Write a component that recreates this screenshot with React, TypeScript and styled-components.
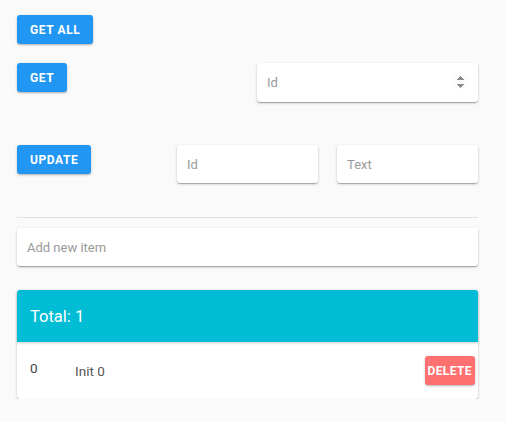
import React from 'react';
import styled, { createGlobalStyle } from 'styled-components';

const Global = createGlobalStyle`
  html, body { margin: 0; padding: 0; background: #fafafa; }
  body { font-family: Roboto, "Noto Sans", sans-serif; }
  * { box-sizing: border-box; }
`;

const Page = styled.div`
  width: 461px;
  margin-left: 17px;
  padding-top: 15px;
  display: flex;
  flex-direction: column;
`;

const Row = styled.div<{ $cols: number; $mb: number }>`
  display: grid;
  grid-template-columns: repeat(${p => p.$cols}, 1fr);
  column-gap: 19px;
  align-items: start;
  margin-bottom: ${p => p.$mb}px;
`;

const Button = styled.button<{ $danger?: boolean }>`
  justify-self: start;
  height: 29px;
  padding: 0 ${p => (p.$danger ? 3 : 13)}px;
  border: none;
  border-radius: 3px;
  background: ${p => (p.$danger ? '#ff7070' : '#2196f3')};
  color: #fff;
  font-family: Roboto, sans-serif;
  font-weight: 700;
  font-size: 12px;
  letter-spacing: ${p => (p.$danger ? 0.4 : 0.6)}px;
  text-transform: uppercase;
  box-shadow: 0 1px 3px rgba(0, 0, 0, 0.2), 0 1px 1px rgba(0, 0, 0, 0.12);
  cursor: pointer;
`;

const Input = styled.input<{ $h?: number }>`
  width: 100%;
  height: ${p => p.$h ?? 38}px;
  padding: 0 10px;
  border: none;
  border-radius: 3px;
  background: #fff;
  font-family: Roboto, sans-serif;
  font-size: 13px;
  color: #333;
  outline: none;
  box-shadow: 0 1px 3px rgba(0, 0, 0, 0.2), 0 1px 1px rgba(0, 0, 0, 0.14),
    0 2px 1px -1px rgba(0, 0, 0, 0.12);
  &::placeholder { color: #9a9a9a; }
  &:focus { caret-color: #2196f3; }
`;

const Divider = styled.hr`
  width: 100%;
  height: 1px;
  border: none;
  background: #e2e2e2;
  margin: 0 0 10px;
`;

const AddWrap = styled.div`
  margin-bottom: 24px;
`;

const Card = styled.div`
  border-radius: 3px;
  background: #fff;
  box-shadow: 0 1px 3px rgba(0, 0, 0, 0.2), 0 1px 1px rgba(0, 0, 0, 0.14),
    0 2px 1px -1px rgba(0, 0, 0, 0.12);
`;

const CardHeader = styled.div`
  height: 52px;
  display: flex;
  align-items: center;
  padding: 0 13px;
  background: #00bcd4;
  color: #fff;
  font-size: 16.5px;
  border-radius: 3px 3px 0 0;
  box-shadow: 0 1px 3px rgba(0, 0, 0, 0.2);
  position: relative;
`;

const ItemRow = styled.div`
  height: 57px;
  display: flex;
  align-items: center;
  padding: 0 3px 0 13px;
`;

const ItemId = styled.span`
  width: 45px;
  font-size: 13.5px;
  color: #444;
  padding-bottom: 5px;
`;

const ItemText = styled.span`
  flex: 1;
  font-size: 13.5px;
  color: #555;
`;

export default function App() {
  const items = [{ id: 0, text: 'Init 0' }];
  return (
    <>
      <Global />
      <Page>
        <Row $cols={1} $mb={19}>
          <Button>Get all</Button>
        </Row>
        <Row $cols={2} $mb={43}>
          <Button>Get</Button>
          <Input type="number" placeholder="Id" $h={39} autoFocus />
        </Row>
        <Row $cols={3} $mb={34}>
          <Button>Update</Button>
          <Input placeholder="Id" />
          <Input placeholder="Text" />
        </Row>
        <Divider />
        <AddWrap>
          <Input placeholder="Add new item" />
        </AddWrap>
        <Card>
          <CardHeader>Total: {items.length}</CardHeader>
          {items.map(it => (
            <ItemRow key={it.id}>
              <ItemId>{it.id}</ItemId>
              <ItemText>{it.text}</ItemText>
              <Button $danger>Delete</Button>
            </ItemRow>
          ))}
        </Card>
      </Page>
    </>
  );
}
